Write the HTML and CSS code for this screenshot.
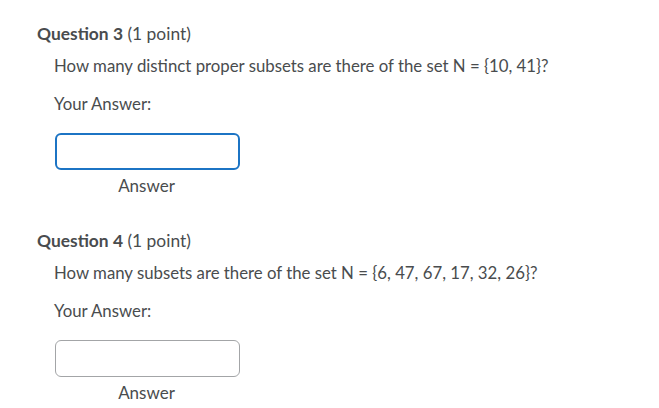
FILE: index.html
```html
<!DOCTYPE html>
<html lang="en">
<head>
<meta charset="utf-8">
<title>Quiz</title>
<link rel="stylesheet" href="styles.css">
</head>
<body>
<div class="page">
  <section class="question">
    <h2 class="q-title"><strong>Question 3</strong> (1 point)</h2>
    <div class="q-body">
      <p class="q-text">How many distinct proper subsets are there of the set N = {10, 41}?</p>
      <p class="q-label">Your Answer:</p>
      <div class="answer-field">
        <input class="answer-input focused" type="text" aria-label="Answer">
        <span class="answer-caption">Answer</span>
      </div>
    </div>
  </section>
  <section class="question q-next">
    <h2 class="q-title"><strong>Question 4</strong> (1 point)</h2>
    <div class="q-body">
      <p class="q-text">How many subsets are there of the set N = {6, 47, 67, 17, 32, 26}?</p>
      <p class="q-label">Your Answer:</p>
      <div class="answer-field">
        <input class="answer-input" type="text" aria-label="Answer">
        <span class="answer-caption">Answer</span>
      </div>
    </div>
  </section>
</div>
</body>
</html>
```
FILE: styles.css
```css
html, body {
  margin: 0;
  padding: 0;
  background: #ffffff;
}
body {
  font-family: Lato, "Open Sans", sans-serif;
  font-size: 16.8px;
  line-height: 20px;
  color: #494c4e;
}
.page {
  padding: 24px 0 0 37px;
}
.question {
  display: flex;
  flex-direction: column;
}
.q-next {
  margin-top: 35px;
}
.q-title {
  margin: 0;
  font-size: 17.4px;
  line-height: 20px;
  font-weight: 400;
}
.q-title strong {
  font-weight: 700;
}
.q-body {
  padding-left: 17px;
  display: flex;
  flex-direction: column;
}
.q-text {
  margin: 12px 0 0 0;
}
.q-label {
  margin: 18px 0 0 0;
}
.answer-field {
  margin-top: 19px;
  width: 185px;
  display: flex;
  flex-direction: column;
  align-items: center;
}
.answer-input {
  box-sizing: border-box;
  width: 185px;
  height: 37px;
  margin: 0 0 0 1px;
  border: 1px solid #a3a5a7;
  border-radius: 6px;
  background: #ffffff;
  font: inherit;
  outline: none;
}
.answer-input.focused {
  border: 2px solid #1c74c4;
}
.answer-caption {
  margin-top: 6px;
  display: block;
  font-size: 17px;
}
```
